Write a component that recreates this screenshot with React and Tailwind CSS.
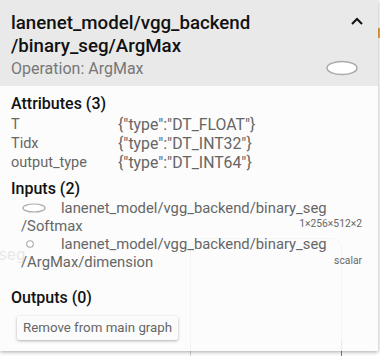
import React from "react";

export default function App() {
  return (
    <div className="relative w-[380px] h-[356px] overflow-hidden bg-white" style={{ fontFamily: "Roboto, 'Liberation Sans', sans-serif" }}>
      {/* background canvas */}
      <div className="absolute left-[193px] top-0 w-[112px] h-[2px] bg-[#f0a43c]" />
      <div className="absolute left-[378px] top-[28px] w-[2px] h-[10px] bg-[#f0a43c]" />
      <div className="absolute left-[190px] top-[238px] w-[152px] h-[140px] rounded-[10px] border border-[#cfcfcf]" />
      <div className="absolute left-[341px] top-[340px] w-[1px] h-[16px] bg-[#777]" />
      <div className="absolute left-[-1px] top-[244px] text-[15px] text-[#666]" style={{ fontFamily: "'DejaVu Sans', sans-serif" }}>seg</div>

      {/* card */}
      <div className="relative w-[378px] h-[351px] bg-[rgba(251,251,251,0.86)] shadow-[0_1px_4px_rgba(0,0,0,0.35)] flex flex-col">
        <div className="bg-[rgba(232,232,232,0.96)] h-[86px] flex pl-[11px] pr-[14px] pt-[12px]">
          <div className="flex-1 flex flex-col">
            <div className="text-[18.7px] leading-[23px] font-medium text-[#111]">
              lanenet_model/vgg_backend
              <br />
              /binary_seg/ArgMax
            </div>
            <div className="text-[16px] leading-[22px] text-[#777]">Operation: ArgMax</div>
          </div>
          <div className="flex flex-col items-end justify-between pb-[10px]">
            <svg width="14" height="10" viewBox="0 0 14 10" className="mt-[4px]">
              <polyline points="2,8 7,3 12,8" fill="none" stroke="#111" strokeWidth="2" />
            </svg>
            <svg width="34" height="16" viewBox="0 0 34 16" className="mr-[5px]">
              <ellipse cx="17" cy="8" rx="15" ry="6.5" fill="#fff" stroke="#aaa" strokeWidth="1.5" />
            </svg>
          </div>
        </div>

        <div className="px-[11px] pt-[8px] flex flex-col">
          <div className="text-[16px] leading-[20px] font-medium text-[#111]">Attributes (3)</div>
          <div className="mt-[1px] leading-[19px] text-[#666]">
            <div className="flex"><div className="w-[107px] text-[14.5px]">T</div><div className="text-[15.8px]">{'{"type":"DT_FLOAT"}'}</div></div>
            <div className="flex"><div className="w-[107px] text-[14.5px]">Tidx</div><div className="text-[15.8px]">{'{"type":"DT_INT32"}'}</div></div>
            <div className="flex"><div className="w-[107px] text-[14.5px]">output_type</div><div className="text-[15.8px]">{'{"type":"DT_INT64"}'}</div></div>
          </div>

          <div className="mt-[7px] text-[16px] leading-[20px] font-medium text-[#111]">Inputs (2)</div>
          <div className="text-[14.8px] leading-[18px] text-[#666]">
            <div className="flex flex-col pl-[10px]">
              <div className="flex items-center">
                <div className="w-[40px] flex items-center">
                  <svg width="24" height="10" viewBox="0 0 24 10" className="ml-[1px]"><ellipse cx="12" cy="5" rx="11" ry="4" fill="#fff" stroke="#aaa" strokeWidth="1.2" /></svg>
                </div>
                <div>lanenet_model/vgg_backend/binary_seg</div>
              </div>
              <div className="flex justify-between items-start">
                <div>/Softmax</div>
                <div className="text-[10.3px] leading-[13px] mr-[5px]">1×256×512×2</div>
              </div>
            </div>
            <div className="flex flex-col pl-[10px]">
              <div className="flex items-center">
                <div className="w-[40px] flex items-center">
                  <svg width="10" height="10" viewBox="0 0 10 10" className="ml-[5px]"><circle cx="4" cy="5" r="3.3" fill="#fff" stroke="#aaa" strokeWidth="1.1" /></svg>
                </div>
                <div>lanenet_model/vgg_backend/binary_seg</div>
              </div>
              <div className="flex justify-between items-start">
                <div>/ArgMax/dimension</div>
                <div className="text-[10.3px] leading-[13px] mt-[1px] mr-[5px]">scalar</div>
              </div>
            </div>
          </div>

          <div className="mt-[17px] text-[16px] leading-[20px] font-medium text-[#111]">Outputs (0)</div>
          <div className="mt-[7px] pl-[6px]">
            <button className="h-[24px] px-[6px] rounded-[2px] bg-[#fbfbfb] shadow-[0_1px_3px_rgba(0,0,0,0.3)] text-[13.3px] text-[#666]">
              Remove from main graph
            </button>
          </div>
        </div>
      </div>
    </div>
  );
}
